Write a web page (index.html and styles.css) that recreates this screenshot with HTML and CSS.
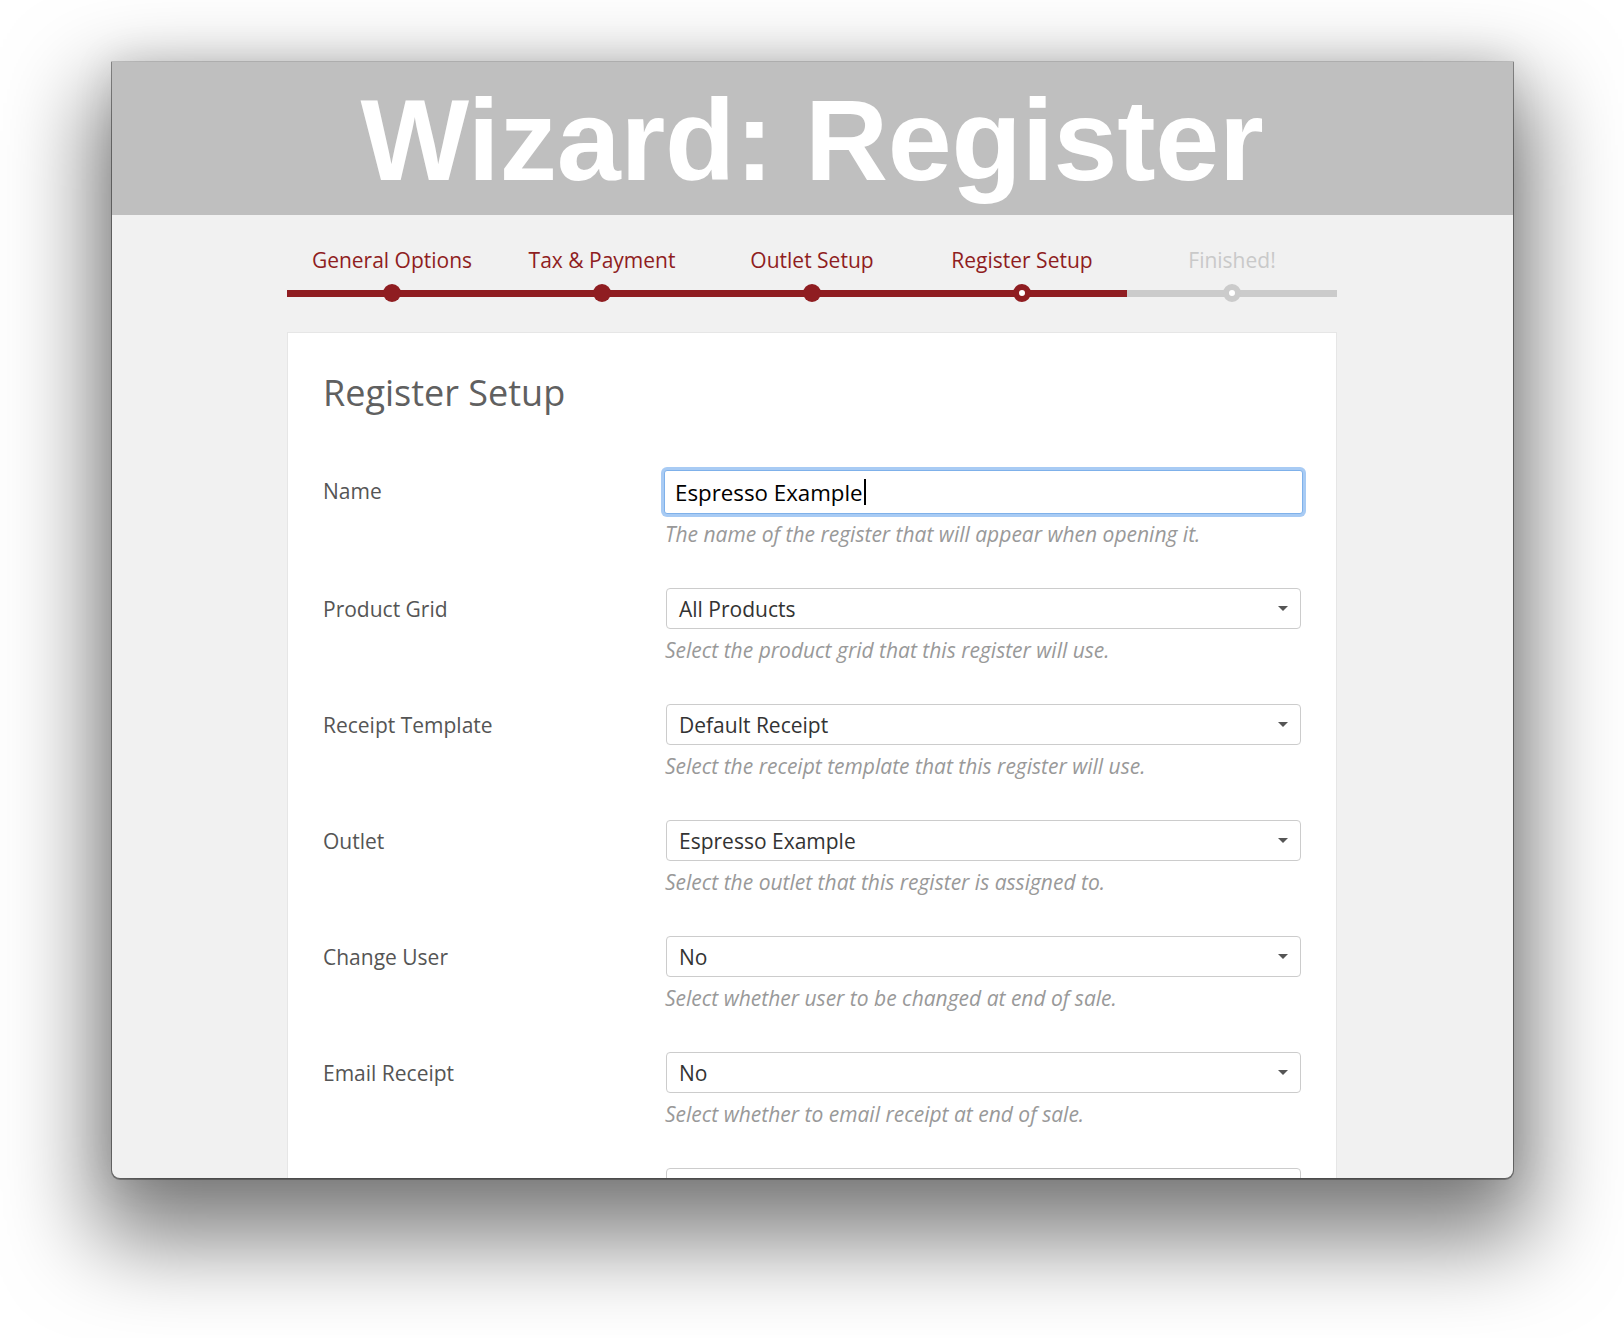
FILE: index.html
```html
<!DOCTYPE html>
<html lang="en">
<head>
<meta charset="utf-8">
<title>Wizard: Register</title>
<link rel="stylesheet" href="styles.css">
</head>
<body>
<div class="window">
  <header class="titlebar"><h1>Wizard: Register</h1></header>
  <main class="content">
    <ol class="steps">
      <li class="step done"><span class="step-label">General Options</span><span class="step-bar"><span class="dot"></span></span></li>
      <li class="step done"><span class="step-label">Tax &amp; Payment</span><span class="step-bar"><span class="dot"></span></span></li>
      <li class="step done"><span class="step-label">Outlet Setup</span><span class="step-bar"><span class="dot"></span></span></li>
      <li class="step current"><span class="step-label">Register Setup</span><span class="step-bar"><span class="dot"></span></span></li>
      <li class="step todo"><span class="step-label">Finished!</span><span class="step-bar"><span class="dot"></span></span></li>
    </ol>
    <section class="card">
      <h2>Register Setup</h2>
      <div class="form">
        <div class="row">
          <div class="label label-tall">Name</div>
          <div class="field">
            <div class="control text-input">Espresso Example<span class="caret"></span></div>
            <p class="help help-tight">The name of the register that will appear when opening it.</p>
          </div>
        </div>
        <div class="row">
          <div class="label">Product Grid</div>
          <div class="field">
            <div class="control select"><span class="value">All Products</span><span class="arrow"></span></div>
            <p class="help">Select the product grid that this register will use.</p>
          </div>
        </div>
        <div class="row">
          <div class="label">Receipt Template</div>
          <div class="field">
            <div class="control select"><span class="value">Default Receipt</span><span class="arrow"></span></div>
            <p class="help">Select the receipt template that this register will use.</p>
          </div>
        </div>
        <div class="row">
          <div class="label">Outlet</div>
          <div class="field">
            <div class="control select"><span class="value">Espresso Example</span><span class="arrow"></span></div>
            <p class="help">Select the outlet that this register is assigned to.</p>
          </div>
        </div>
        <div class="row">
          <div class="label">Change User</div>
          <div class="field">
            <div class="control select"><span class="value">No</span><span class="arrow"></span></div>
            <p class="help">Select whether user to be changed at end of sale.</p>
          </div>
        </div>
        <div class="row">
          <div class="label">Email Receipt</div>
          <div class="field">
            <div class="control select"><span class="value">No</span><span class="arrow"></span></div>
            <p class="help">Select whether to email receipt at end of sale.</p>
          </div>
        </div>
        <div class="row">
          <div class="label"></div>
          <div class="field">
            <div class="control select"><span class="value"></span><span class="arrow"></span></div>
          </div>
        </div>
      </div>
    </section>
  </main>
</div>
</body>
</html>
```

FILE: styles.css
```css
html, body {
  margin: 0;
  padding: 0;
  width: 1624px;
  height: 1338px;
  overflow: hidden;
  background: #ffffff;
}

body {
  font-family: "Open Sans", "Noto Sans", sans-serif;
}

.window {
  width: 1401px;
  height: 1116px;
  margin: 62px auto 0;
  background: #f1f1f1;
  border-radius: 0 0 8px 8px;
  overflow: hidden;
  display: flex;
  flex-direction: column;
  box-shadow:
    0 0 0 1px rgba(0, 0, 0, 0.16),
    0 1px 0 1px rgba(0, 0, 0, 0.3),
    0 45px 90px 18px rgba(0, 0, 0, 0.5),
    0 0 40px rgba(0, 0, 0, 0.12);
}

.titlebar {
  flex: none;
  height: 153px;
  box-sizing: border-box;
  padding-top: 21px;
  background: #bfbfbf;
  text-align: center;
}

.titlebar h1 {
  margin: 0;
  font-family: "Liberation Sans", Arial, sans-serif;
  font-weight: 700;
  font-size: 115px;
  line-height: 115px;
  letter-spacing: -0.2px;
  color: #ffffff;
}

.content {
  flex: 1;
  padding-top: 31px;
}

.steps {
  list-style: none;
  margin: 0 auto;
  padding: 0;
  width: 1050px;
  display: grid;
  grid-template-columns: repeat(5, 1fr);
}

.step {
  display: flex;
  flex-direction: column;
  align-items: center;
}

.step-label {
  font-size: 21px;
  line-height: 28px;
  color: #8f1d21;
  white-space: nowrap;
}

.step-bar {
  align-self: stretch;
  height: 18px;
  margin-top: 10px;
  display: flex;
  justify-content: center;
  background: linear-gradient(#8f1d21, #8f1d21) center / 100% 7px no-repeat;
}

.dot {
  width: 18px;
  height: 18px;
  box-sizing: border-box;
  border-radius: 50%;
  background: #8f1d21;
}

.current .dot {
  background: #ffffff;
  border: 6px solid #8f1d21;
}

.todo .step-label {
  color: #c9c9c9;
}

.todo .step-bar {
  background-image: linear-gradient(#cbcbcb, #cbcbcb);
}

.todo .dot {
  background: #ffffff;
  border: 6px solid #cbcbcb;
}

.card {
  width: 1050px;
  height: 1000px;
  margin: 30px auto 0;
  box-sizing: border-box;
  padding: 38px 35px 0 35px;
  background: #ffffff;
  border: 1px solid #e6e6e6;
}

.card h2 {
  margin: 0;
  font-size: 36px;
  line-height: 44px;
  font-weight: 400;
  color: #606060;
}

.form {
  margin-top: 55px;
}

.row {
  display: grid;
  grid-template-columns: 343px 1fr;
  align-items: start;
  margin-bottom: 41px;
}

.label {
  height: 41px;
  display: flex;
  align-items: center;
  font-size: 21px;
  line-height: 28px;
  color: #555555;
}

.label-tall {
  height: 42px;
}

.control {
  box-sizing: border-box;
  height: 41px;
  display: flex;
  align-items: center;
  padding: 0 12px;
  border: 1px solid #cccccc;
  border-radius: 4px;
  background: #ffffff;
  font-size: 21px;
  color: #333333;
}

.text-input {
  height: 44px;
  margin: 0 -2px 0 -2px;
  padding-left: 10px;
  border-color: #7fb1ea;
  border-radius: 3px;
  font-size: 22.3px;
  color: #000000;
  box-shadow: 0 0 0 3px #a8cbf4;
}

.caret {
  display: inline-block;
  width: 2px;
  height: 26px;
  margin-left: 1px;
  background: #000000;
}

.select .value {
  flex: 1;
}

.arrow {
  width: 0;
  height: 0;
  border-left: 5px solid transparent;
  border-right: 5px solid transparent;
  border-top: 5px solid #555555;
}

.help {
  margin: 8px 0 0 -1px;
  font-size: 21px;
  line-height: 26px;
  font-style: italic;
  color: #999999;
}

.help-tight {
  margin-top: 7px;
}
```
